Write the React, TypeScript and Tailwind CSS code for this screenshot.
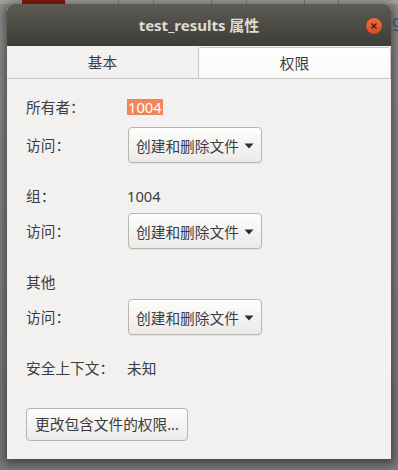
import React from "react";

const font = { fontFamily: '"Noto Sans", "Noto Sans CJK SC", sans-serif' };

function Dropdown() {
  return (
    <div className="flex h-[36px] w-[134px] items-center justify-between rounded-[4px] border border-[#b8b5b0] bg-gradient-to-b from-[#fdfdfc] to-[#eceae8] pl-[7px] pr-[7px] shadow-[0_1px_0_rgba(0,0,0,0.06)]">
      <span className="pt-[3px] text-[14.7px] leading-none text-[#3c3c3c]">创建和删除文件</span>
      <svg width="10" height="6" viewBox="0 0 10 6" className="mt-[2px]">
        <path d="M0.5 0.5 L9.5 0.5 L5 5.5 Z" fill="#2e2e2e" />
      </svg>
    </div>
  );
}

function Row({ label, children, className = "" }: { label: string; children?: React.ReactNode; className?: string }) {
  return (
    <div className={"flex items-center " + className}>
      <div className="w-[101px] shrink-0 text-[14.7px] leading-none text-[#3c3c3c]">{label}</div>
      {children}
    </div>
  );
}

export default function App() {
  return (
    <div className="relative flex h-[470px] w-[398px] flex-col overflow-hidden bg-gradient-to-b from-[#8e8e8e] to-[#7a7a7a]" style={font}>
      {/* desktop strip behind window */}
      <div className="flex h-[4px] shrink-0 bg-[#a3a3a3]">
        <div className="ml-[22px] w-[43px] bg-[#8a1c08]" />
        <div className="w-[54px] border-r border-[#7c7c7c]" />
        <div className="w-[35px] border-r border-[#7c7c7c]" />
        <div className="w-[58px] border-r border-[#7c7c7c]" />
        <div className="w-[35px] border-r border-[#7c7c7c]" />
        <div className="w-[58px] border-r border-[#7c7c7c]" />
        <div className="w-[34px] border-r border-[#7c7c7c]" />
      </div>
      <div className="flex">
        <div className="w-[7px] shrink-0" />
        {/* window */}
        <div className="flex h-[455px] w-[384px] shrink-0 flex-col overflow-hidden rounded-t-[7px] bg-[#f2f1f0] shadow-[0_2px_10px_3px_rgba(0,0,0,0.45)]">
          {/* title bar */}
          <div className="relative flex h-[42px] shrink-0 items-center justify-center bg-gradient-to-b from-[#5c5b53] to-[#3d3c37]">
            <span className="text-[15px] font-bold text-[#dfdbd2]">test_results 属性</span>
            <div className="absolute right-[9px] top-[14px] flex h-[16px] w-[16px] items-center justify-center rounded-full bg-gradient-to-b from-[#f26c3d] to-[#d94a1c] shadow-[0_0_1px_rgba(0,0,0,0.5)]">
              <svg width="8" height="8" viewBox="0 0 8 8">
                <path d="M1.5 1.5 L6.5 6.5 M6.5 1.5 L1.5 6.5" stroke="#3a1a10" strokeWidth="1.3" />
              </svg>
            </div>
          </div>
          {/* tabs */}
          <div className="flex h-[33px] shrink-0 border-b border-[#c9c7c3] bg-[#f2f1f0]">
            <div className="flex w-[191px] items-center justify-center text-[14.7px] text-[#3c3c3c]">基本</div>
            <div className="mt-[1px] flex flex-1 items-center justify-center rounded-t-[3px] border-l border-r border-t border-[#c9c7c3] bg-gradient-to-b from-[#ffffff] to-[#f8f8f7] text-[14.7px] text-[#3c3c3c]">
              权限
            </div>
          </div>
          {/* body */}
          <div className="flex flex-col pl-[19px] pt-[18px]">
            <Row label="所有者：" className="h-[20px]">
              <span className="bg-[#f2845a] px-[1px] text-[14.7px] leading-[16px] text-white">1004</span>
            </Row>
            <Row label="访问：" className="mt-[10px]">
              <div className="ml-[1px]"><Dropdown /></div>
            </Row>
            <Row label="组：" className="mt-[23px] h-[20px]">
              <span className="text-[14.7px] leading-none text-[#3c3c3c]">1004</span>
            </Row>
            <Row label="访问：" className="mt-[7px]">
              <div className="ml-[1px]"><Dropdown /></div>
            </Row>
            <Row label="其他" className="mt-[23px] h-[20px]" />
            <Row label="访问：" className="mt-[7px]">
              <div className="ml-[1px]"><Dropdown /></div>
            </Row>
            <Row label="安全上下文：" className="mt-[23px] h-[20px]">
              <span className="text-[14.7px] leading-none text-[#3c3c3c]">未知</span>
            </Row>
            <div className="mt-[30px] flex">
              <div className="flex h-[33px] w-[162px] items-center justify-center rounded-[4px] border border-[#b8b5b0] bg-gradient-to-b from-[#fdfdfc] to-[#eceae8] text-[14.7px] text-[#3c3c3c]">
                更改包含文件的权限...
              </div>
            </div>
          </div>
        </div>
        <div className="w-[7px] shrink-0 overflow-hidden">
          <span className="ml-[1px] mt-[9px] block text-[16px] leading-none text-[#34495e]">g</span>
        </div>
      </div>
    </div>
  );
}
